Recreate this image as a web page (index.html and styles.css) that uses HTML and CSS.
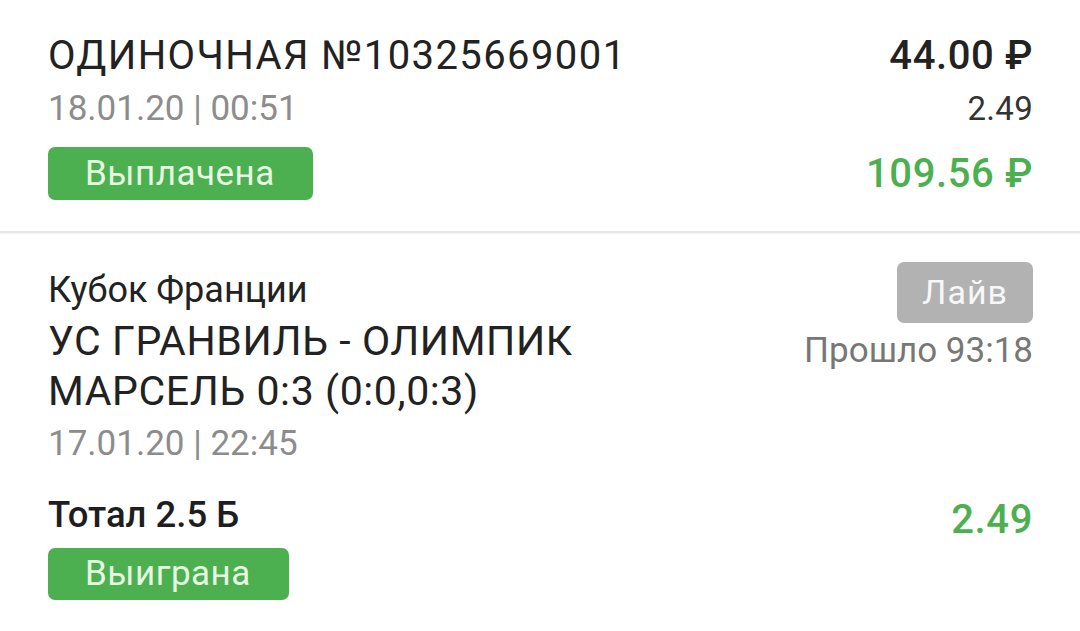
FILE: index.html
```html
<!DOCTYPE html>
<html lang="ru">
<head>
<meta charset="utf-8">
<title>Ставка</title>
<link rel="stylesheet" href="styles.css">
</head>
<body>
<div class="page">
  <section class="bet-head">
    <div class="col-left">
      <div class="title">ОДИНОЧНАЯ №10325669001</div>
      <div class="date">18.01.20 | 00:51</div>
      <div class="status"><span class="chip chip-green">Выплачена</span></div>
    </div>
    <div class="col-right">
      <div class="stake">44.00 ₽</div>
      <div class="coef">2.49</div>
      <div class="payout">109.56 ₽</div>
    </div>
  </section>
  <section class="event">
    <div class="event-top">
      <div class="col-left">
        <div class="league">Кубок Франции</div>
        <div class="match">УС ГРАНВИЛЬ - ОЛИМПИК<br>МАРСЕЛЬ 0:3 (0:0,0:3)</div>
        <div class="date">17.01.20 | 22:45</div>
      </div>
      <div class="col-right">
        <span class="chip chip-gray">Лайв</span>
        <div class="elapsed">Прошло 93:18</div>
      </div>
    </div>
    <div class="event-bottom">
      <div class="col-left">
        <div class="market">Тотал 2.5 Б</div>
        <div class="status2"><span class="chip chip-green chip-small">Выиграна</span></div>
      </div>
      <div class="col-right">
        <div class="event-coef">2.49</div>
      </div>
    </div>
  </section>
</div>
</body>
</html>
```

FILE: styles.css
```css
* { box-sizing: border-box; }
html, body {
  margin: 0;
  padding: 0;
  background: #ffffff;
  width: 1080px;
  height: 631px;
  overflow: hidden;
}
body {
  font-family: Roboto, "Noto Sans", "Liberation Sans", sans-serif;
  color: #212121;
}
.page { width: 1080px; }

.bet-head {
  display: flex;
  justify-content: space-between;
  padding: 31px 47px 31px 48px;
  border-bottom: 2px solid #e7e7e7;
  box-shadow: 0 1px 2px rgba(0,0,0,0.05);
}
.col-left { display: flex; flex-direction: column; align-items: flex-start; }
.col-right { display: flex; flex-direction: column; align-items: flex-end; text-align: right; }

.title {
  font-size: 40px;
  line-height: 50px;
  letter-spacing: 1.4px;
  color: #222;
}
.date {
  font-size: 35px;
  line-height: 56px;
  color: #8c8c8c;
}
.status { margin-top: 10px; }
.chip {
  display: inline-block;
  border-radius: 7px;
  white-space: nowrap;
}
.chip-green {
  background: #4caf50;
  color: #e6f8e2;
  font-size: 35px;
  line-height: 53px;
  height: 53px;
  padding: 0 38px 0 37px;
  letter-spacing: 0.5px;
}
.stake {
  font-size: 40px;
  line-height: 50px;
  font-weight: 500;
  letter-spacing: 0.6px;
  color: #222;
}
.coef {
  font-size: 33px;
  line-height: 56px;
  color: #333;
  letter-spacing: 0.3px;
}
.payout {
  margin-top: 10px;
  font-size: 40px;
  line-height: 53px;
  font-weight: 500;
  color: #4caf50;
  letter-spacing: 0.6px;
}

.event {
  padding: 29px 47px 0 48px;
}
.event-top {
  display: flex;
  justify-content: space-between;
}
.event-top .col-left { padding-top: 5px; }
.league {
  font-size: 36px;
  line-height: 46px;
  color: #222;
}
.match {
  margin-top: 3px;
  font-size: 41px;
  line-height: 50px;
  letter-spacing: 0.6px;
  color: #222;
}
.chip-gray {
  background: #b2b2b2;
  color: #f7f7f7;
  font-size: 34px;
  line-height: 61px;
  height: 61px;
  padding: 0 25px;
  letter-spacing: 1px;
}
.elapsed {
  font-size: 35px;
  line-height: 55px;
  color: #777;
}
.event-bottom {
  display: flex;
  justify-content: space-between;
  align-items: flex-start;
  margin-top: 25px;
}
.market {
  font-size: 36.5px;
  line-height: 35px;
  font-weight: 500;
  color: #1e1e1e;
}
.status2 { margin-top: 16px; }
.chip-small {
  height: 52px;
  line-height: 52px;
}
.event-coef {
  font-size: 40px;
  line-height: 45px;
  font-weight: 500;
  color: #4caf50;
  letter-spacing: 0.6px;
}
```
